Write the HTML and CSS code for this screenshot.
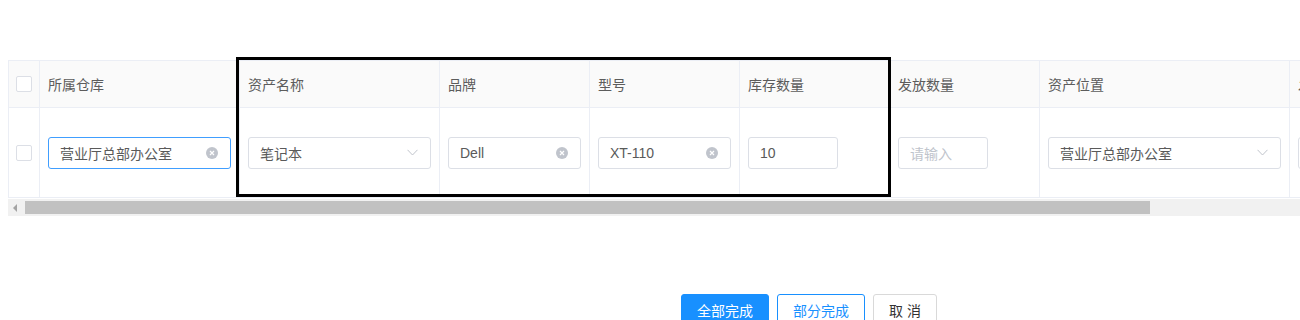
FILE: index.html
```html
<!DOCTYPE html>
<html lang="zh-CN">

<head>
    <meta charset="UTF-8">
    <meta name="viewport" content="width=device-width, initial-scale=1.0">
    <title>资产发放</title>
    <link rel="stylesheet" href="styles.css">
</head>

<body>
    <div class="page">
        <div class="table-wrap">
            <div class="table-clip">
                <table class="grid">
                    <thead>
                        <tr>
                            <th class="c-check"><span class="checkbox"></span></th>
                            <th class="c-wide">所属仓库</th>
                            <th class="c-wide">资产名称</th>
                            <th class="c-mid">品牌</th>
                            <th class="c-mid">型号</th>
                            <th class="c-mid">库存数量</th>
                            <th class="c-mid">发放数量</th>
                            <th class="c-big">资产位置</th>
                            <th class="c-wide">发放人</th>
                        </tr>
                    </thead>
                    <tbody>
                        <tr>
                            <td class="c-check"><span class="checkbox"></span></td>
                            <td>
                                <div class="field focus">
                                    <span class="val">营业厅总部办公室</span>
                                    <svg class="clear" width="12" height="12" viewBox="0 0 12 12"><circle cx="6" cy="6" r="6" fill="#c0c4cc"/><path d="M4 4L8 8M8 4L4 8" stroke="#fff" stroke-width="1.2"/></svg>
                                </div>
                            </td>
                            <td>
                                <div class="field">
                                    <span class="val">笔记本</span>
                                    <svg class="arrow" width="11" height="7" viewBox="0 0 11 7"><path d="M0.5 0.8L5.5 6L10.5 0.8" fill="none" stroke="#c0c4cc" stroke-width="1"/></svg>
                                </div>
                            </td>
                            <td>
                                <div class="field">
                                    <span class="val">Dell</span>
                                    <svg class="clear" width="12" height="12" viewBox="0 0 12 12"><circle cx="6" cy="6" r="6" fill="#c0c4cc"/><path d="M4 4L8 8M8 4L4 8" stroke="#fff" stroke-width="1.2"/></svg>
                                </div>
                            </td>
                            <td>
                                <div class="field">
                                    <span class="val">XT-110</span>
                                    <svg class="clear" width="12" height="12" viewBox="0 0 12 12"><circle cx="6" cy="6" r="6" fill="#c0c4cc"/><path d="M4 4L8 8M8 4L4 8" stroke="#fff" stroke-width="1.2"/></svg>
                                </div>
                            </td>
                            <td>
                                <div class="field small">
                                    <span class="val">10</span>
                                </div>
                            </td>
                            <td>
                                <div class="field small">
                                    <span class="val placeholder">请输入</span>
                                </div>
                            </td>
                            <td>
                                <div class="field">
                                    <span class="val">营业厅总部办公室</span>
                                    <svg class="arrow" width="11" height="7" viewBox="0 0 11 7"><path d="M0.5 0.8L5.5 6L10.5 0.8" fill="none" stroke="#c0c4cc" stroke-width="1"/></svg>
                                </div>
                            </td>
                            <td>
                                <div class="field">
                                    <span class="val placeholder">请选择</span>
                                </div>
                            </td>
                        </tr>
                    </tbody>
                </table>
            </div>
            <div class="hscroll">
                <span class="hscroll-arrow"></span>
                <span class="hscroll-thumb"></span>
            </div>
            <div class="mark"></div>
        </div>

        <div class="actions">
            <button class="btn btn-primary">全部完成</button>
            <button class="btn btn-plain">部分完成</button>
            <button class="btn">取 消</button>
        </div>
    </div>
</body>

</html>
```

FILE: styles.css
```css
html,
body {
    margin: 0;
    padding: 0;
    overflow: hidden;
}

body {
    font-family: "Liberation Sans", "Noto Sans CJK SC", sans-serif;
    font-size: 14px;
    color: #606266;
    background: #fff;
}

.page {
    padding: 60px 0 0 8px;
}

.table-wrap {
    position: relative;
}

.table-clip {
    overflow: hidden;
}

.grid {
    border-collapse: separate;
    border-spacing: 0;
    table-layout: fixed;
    width: 1482px;
}

.grid th,
.grid td {
    box-sizing: border-box;
    border-right: 1px solid #ebeef5;
    border-bottom: 1px solid #ebeef5;
    padding: 0 8px;
    text-align: left;
}

.grid th {
    height: 48px;
    border-top: 1px solid #ebeef5;
    background: #fafafa;
    font-weight: normal;
    color: #5c5c5c;
}

.grid td {
    height: 90px;
}

.grid .c-check {
    width: 32px;
    border-left: 1px solid #ebeef5;
    padding: 0 0 0 7px;
}

.grid .c-wide {
    width: 200px;
}

.grid .c-mid {
    width: 150px;
}

.grid .c-big {
    width: 250px;
}

.checkbox {
    display: block;
    width: 14px;
    height: 14px;
    border: 1px solid #dcdfe6;
    border-radius: 2px;
    background: #fff;
}

.field {
    box-sizing: border-box;
    display: flex;
    align-items: center;
    justify-content: space-between;
    height: 32px;
    width: 100%;
    padding: 0 11px 0 11px;
    border: 1px solid #dcdfe6;
    border-radius: 3px;
    background: #fff;
}

.field.focus {
    border-color: #409eff;
}

.field.small {
    width: 90px;
}

.val {
    white-space: nowrap;
    color: #5a5a5a;
}

.val.placeholder {
    color: #c0c4cc;
}

.clear {
    margin-right: 1px;
}

.arrow {
    margin-right: 1px;
}

.hscroll {
    display: flex;
    align-items: center;
    height: 17px;
    margin-top: 1px;
    background: #f1f1f1;
}

.hscroll-arrow {
    width: 0;
    height: 0;
    margin: 0 8px 0 5px;
    border-top: 4px solid transparent;
    border-bottom: 4px solid transparent;
    border-right: 4px solid #a3a3a3;
}

.hscroll-thumb {
    width: 1125px;
    height: 13px;
    background: #c1c1c1;
}

.mark {
    position: absolute;
    left: 228px;
    top: -3px;
    width: 655px;
    height: 140px;
    box-sizing: border-box;
    border: 3px solid #000;
    pointer-events: none;
}

.actions {
    display: flex;
    gap: 8px;
    padding: 78px 0 0 673px;
}

.btn {
    height: 32px;
    padding: 0 15px;
    font-family: "Liberation Sans", "Noto Sans CJK SC", sans-serif;
    font-size: 14px;
    color: #333;
    background: #fff;
    border: 1px solid #d9d9d9;
    border-radius: 3px;
}

.btn-primary {
    color: #fff;
    background: #1890ff;
    border-color: #1890ff;
}

.btn-plain {
    color: #1890ff;
    border-color: #1890ff;
}
```
